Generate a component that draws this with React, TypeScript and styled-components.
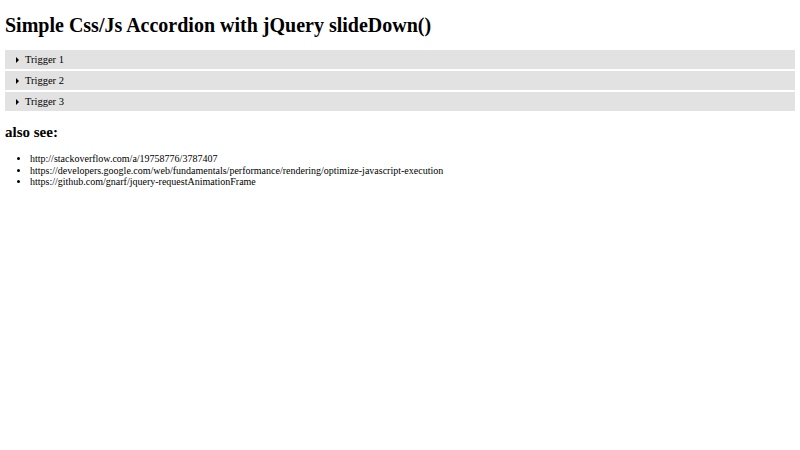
import React from 'react';
import styled, { createGlobalStyle } from 'styled-components';

const GlobalStyle = createGlobalStyle`
  html, body {
    margin: 0;
    padding: 0;
    background: #fff;
  }
  body {
    padding: 5px;
    font-family: "Liberation Serif", "Times New Roman", serif;
    color: #000;
  }
`;

const Title = styled.h1`
  font-size: 20px;
  font-weight: bold;
  margin: 9px 0 13px;
  line-height: 23px;
`;

const Accordion = styled.div`
  display: flex;
  flex-direction: column;
  gap: 2px;
`;

const Trigger = styled.div`
  display: flex;
  align-items: center;
  gap: 6px;
  height: 19px;
  padding-left: 11px;
  background: #e2e2e2;
  font-size: 10.5px;
  cursor: pointer;
`;

const Arrow = styled.span`
  width: 0;
  height: 0;
  border-top: 3px solid transparent;
  border-bottom: 3px solid transparent;
  border-left: 3.5px solid #000;
`;

const SubTitle = styled.h2`
  font-size: 15px;
  font-weight: bold;
  margin: 13px 0 12px;
  line-height: 17px;
`;

const Links = styled.ul`
  margin: 0;
  padding-left: 25px;
  font-size: 10px;
  line-height: 11.5px;
`;

const triggers = ['Trigger 1', 'Trigger 2', 'Trigger 3'];

const links = [
  'http://stackoverflow.com/a/19758776/3787407',
  'https://developers.google.com/web/fundamentals/performance/rendering/optimize-javascript-execution',
  'https://github.com/gnarf/jquery-requestAnimationFrame',
];

export default function App() {
  return (
    <>
      <GlobalStyle />
      <Title>Simple Css/Js Accordion with jQuery slideDown()</Title>
      <Accordion>
        {triggers.map((t) => (
          <Trigger key={t}>
            <Arrow />
            {t}
          </Trigger>
        ))}
      </Accordion>
      <SubTitle>also see:</SubTitle>
      <Links>
        {links.map((l) => (
          <li key={l}>{l}</li>
        ))}
      </Links>
    </>
  );
}
